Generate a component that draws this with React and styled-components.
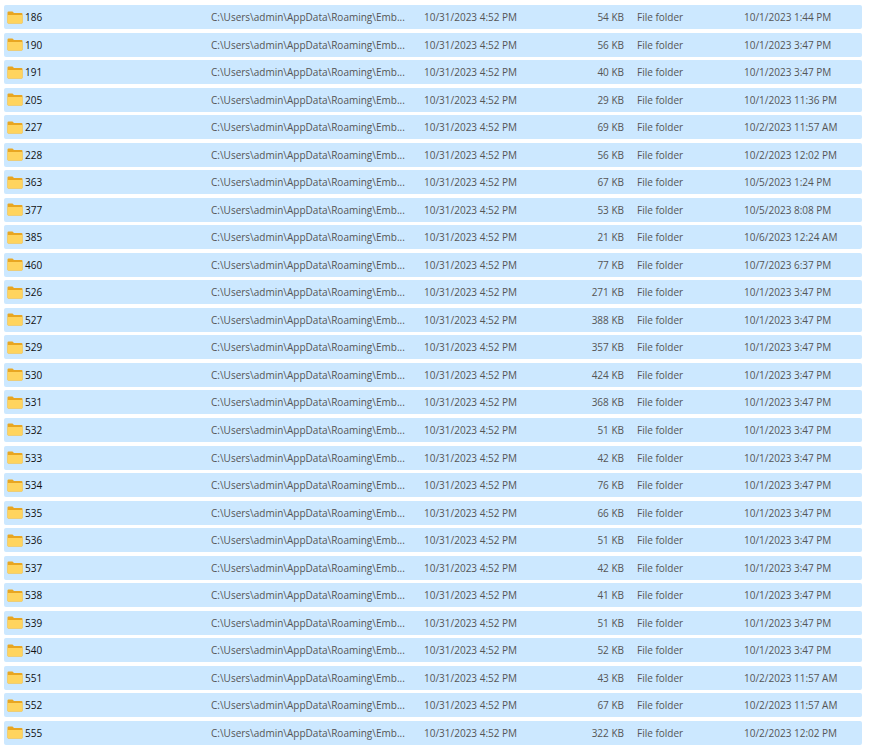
import React from "react";
import styled, { createGlobalStyle } from "styled-components";

const G = createGlobalStyle`
  body { margin: 0; background: #fff; font-family: "Open Sans", "Noto Sans", sans-serif; }
`;
const List = styled.div`
  display: flex; flex-direction: column; gap: 3.54px; padding: 5px 8px 0 4px;
`;
const Row = styled.div`
  display: grid; grid-template-columns: 21px 186px 213px 136px 64px 13px 107px 1fr;
  align-items: center; height: 24px; background: #cce8ff; border-radius: 2px;
  font-size: 10px; color: #555; white-space: nowrap;
`;
const Name = styled.span` color: #111; `;
const Cell = styled.span` overflow: hidden; `;
const Size = styled.span` text-align: right; `;
const Icon = () => (
  <svg width="16" height="13" viewBox="0 0 16 13" style={{ marginLeft: 3 }}>
    <path d="M0.5 1.5 Q0.5 0.5 1.5 0.5 H5.5 L7 2 H14.5 Q15.5 2 15.5 3 V11.5 Q15.5 12.5 14.5 12.5 H1.5 Q0.5 12.5 0.5 11.5Z" fill="#e8a622" />
    <path d="M0.5 4 H15.5 V11.5 Q15.5 12.5 14.5 12.5 H1.5 Q0.5 12.5 0.5 11.5Z" fill="#ffd45e" />
  </svg>
);
const data = [
["186","54 KB","10/1/2023 1:44 PM"],["190","56 KB","10/1/2023 3:47 PM"],["191","40 KB","10/1/2023 3:47 PM"],
["205","29 KB","10/1/2023 11:36 PM"],["227","69 KB","10/2/2023 11:57 AM"],["228","56 KB","10/2/2023 12:02 PM"],
["363","67 KB","10/5/2023 1:24 PM"],["377","53 KB","10/5/2023 8:08 PM"],["385","21 KB","10/6/2023 12:24 AM"],
["460","77 KB","10/7/2023 6:37 PM"],["526","271 KB","10/1/2023 3:47 PM"],["527","388 KB","10/1/2023 3:47 PM"],
["529","357 KB","10/1/2023 3:47 PM"],["530","424 KB","10/1/2023 3:47 PM"],["531","368 KB","10/1/2023 3:47 PM"],
["532","51 KB","10/1/2023 3:47 PM"],["533","42 KB","10/1/2023 3:47 PM"],["534","76 KB","10/1/2023 3:47 PM"],
["535","66 KB","10/1/2023 3:47 PM"],["536","51 KB","10/1/2023 3:47 PM"],["537","42 KB","10/1/2023 3:47 PM"],
["538","41 KB","10/1/2023 3:47 PM"],["539","51 KB","10/1/2023 3:47 PM"],["540","52 KB","10/1/2023 3:47 PM"],
["551","43 KB","10/2/2023 11:57 AM"],["552","67 KB","10/2/2023 11:57 AM"],["555","322 KB","10/2/2023 12:02 PM"]];
export default function App() {
  return (<><G /><List>{data.map(([n,s,d]) => (
    <Row key={n}><Icon /><Name>{n}</Name><Cell>C:\Users\admin\AppData\Roaming\Emb...</Cell>
      <Cell>10/31/2023 4:52 PM</Cell><Size>{s}</Size><span /><Cell>File folder</Cell><Cell>{d}</Cell></Row>
  ))}</List></>);
}
